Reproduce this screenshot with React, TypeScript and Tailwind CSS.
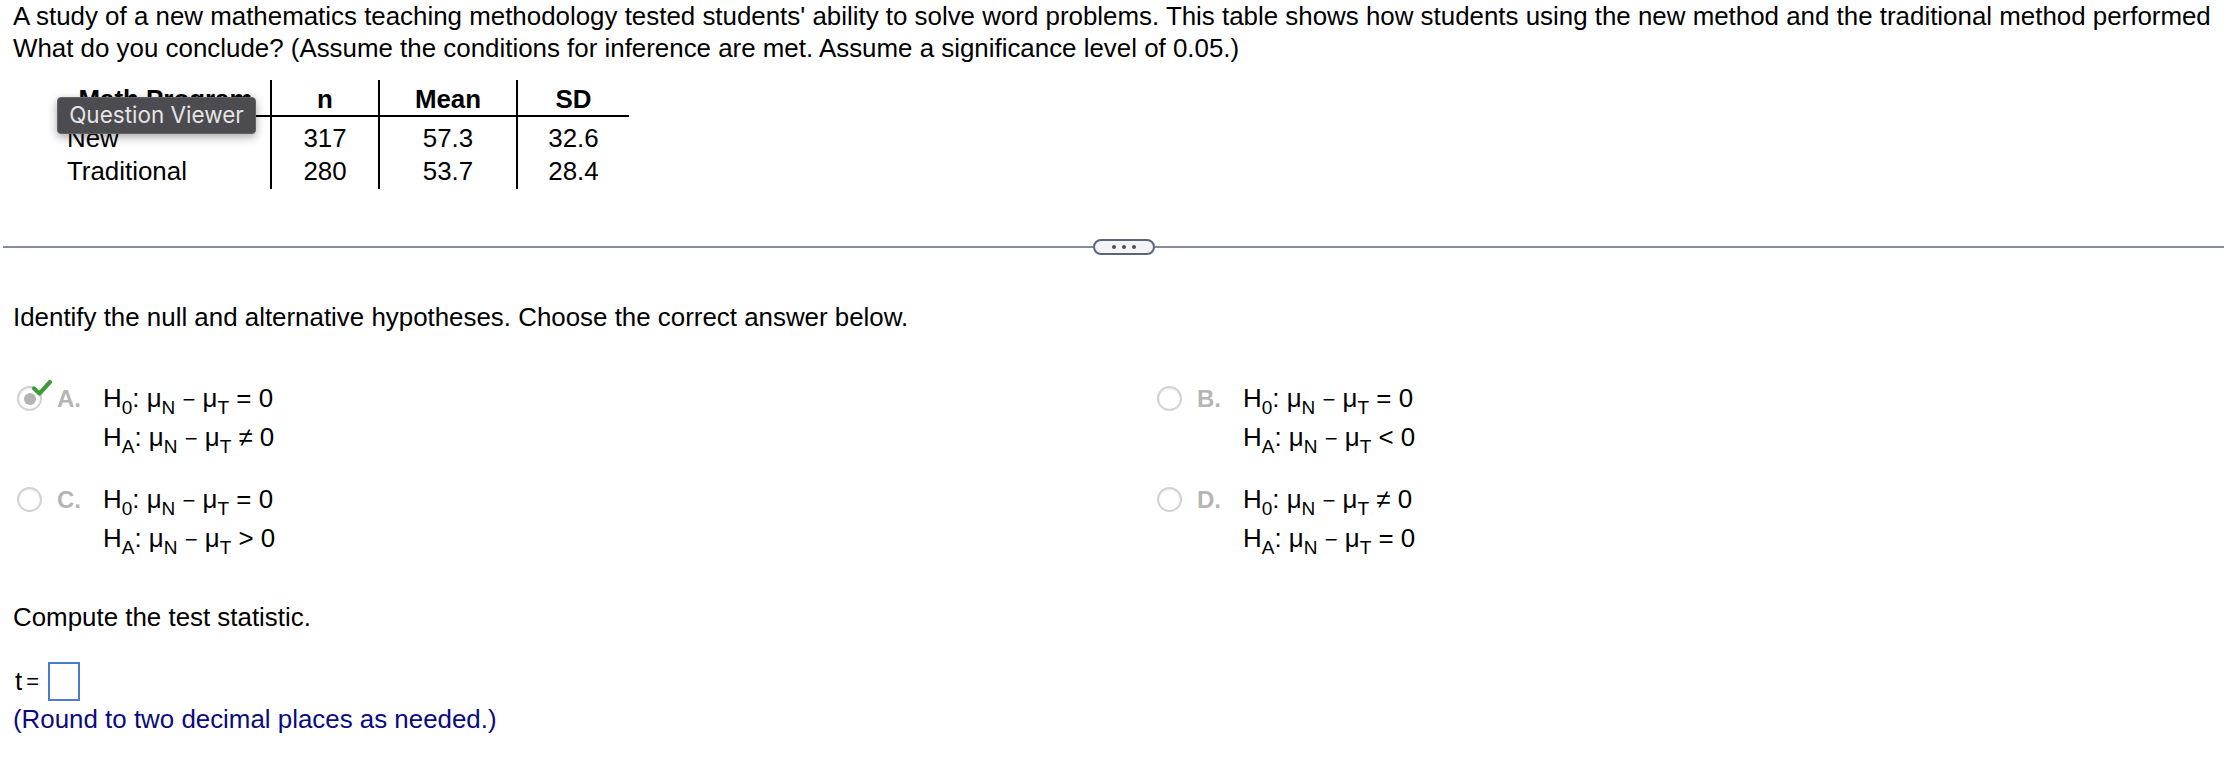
import React from 'react';

type Opt = {
    letter: string;
    h0: string;
    ha: string;
    checked?: boolean;
};

const options: Opt[] = [
    { letter: 'A.', h0: '=', ha: '≠', checked: true },
    { letter: 'B.', h0: '=', ha: '<' },
    { letter: 'C.', h0: '=', ha: '>' },
    { letter: 'D.', h0: '≠', ha: '=' },
];

function Sub({ children }: { children: React.ReactNode }) {
    return <span className="relative top-[7px] text-[19px] leading-none">{children}</span>;
}

function Minus() {
    return <span className="text-[22px] leading-none">−</span>;
}

function Radio({ checked }: { checked?: boolean }) {
    return (
        <div className="relative w-[25px] h-[25px]">
            <div className="w-[25px] h-[25px] rounded-full border-[2.5px] border-[#d2d2d2] bg-white flex items-center justify-center shadow-[inset_0_1px_2px_rgba(0,0,0,0.08)]">
                {checked && <div className="w-[12px] h-[12px] rounded-full bg-[#b3b3b3]" />}
            </div>
            {checked && (
                <svg className="absolute left-[14px] top-[-7px]" width="22" height="18" viewBox="0 0 22 18">
                    <path
                        d="M3 9.5 L8.5 14.5 L19 3"
                        fill="none"
                        stroke="#3f9b3a"
                        strokeWidth="4.2"
                        strokeLinecap="round"
                        strokeLinejoin="round"
                    />
                </svg>
            )}
        </div>
    );
}

function Option({ opt }: { opt: Opt }) {
    return (
        <div className="flex items-start">
            <div className="w-[40px] h-[39px] flex items-center">
                <Radio checked={opt.checked} />
            </div>
            <div className="w-[46px] h-[39px] leading-[39px] font-bold text-[24px] text-[#b5b5b5]">{opt.letter}</div>
            <div className="leading-[39px] whitespace-nowrap">
                <div className="h-[39px]">
                    H<Sub>0</Sub>: μ<Sub>N</Sub> <Minus /> μ<Sub>T</Sub> {opt.h0} 0
                </div>
                <div className="h-[39px]">
                    H<Sub>A</Sub>: μ<Sub>N</Sub> <Minus /> μ<Sub>T</Sub> {opt.ha} 0
                </div>
            </div>
        </div>
    );
}

export default function App() {
    return (
        <div className="w-[2224px] h-[772px] overflow-hidden bg-white text-black font-['Liberation_Sans',Arial,sans-serif] text-[25.9px]">
            {/* question text */}
            <div className="pl-[13px] leading-[32px] whitespace-nowrap">
                <p>
                    A study of a new mathematics teaching methodology tested students' ability to solve word problems. This table shows how students using the new method and the traditional method performed
                </p>
                <p>What do you conclude? (Assume the conditions for inference are met. Assume a significance level of 0.05.)</p>
            </div>

            {/* data table */}
            <div className="relative ml-[61px] mt-[16px] w-fit leading-none">
                <div className="flex h-[37px] border-b-2 border-black font-bold">
                    <div className="w-[209px] pt-[7px] text-center">Math Program</div>
                    <div className="w-[108px] pt-[7px] text-center border-l-2 border-black">n</div>
                    <div className="w-[138px] pt-[7px] text-center border-l-2 border-black">Mean</div>
                    <div className="w-[113px] pt-[7px] text-center border-l-2 border-black">SD</div>
                </div>
                <div className="flex h-[39px]">
                    <div className="w-[209px] pt-[9px] pl-[6px]">New</div>
                    <div className="w-[108px] pt-[9px] text-center border-l-2 border-black">317</div>
                    <div className="w-[138px] pt-[9px] text-center border-l-2 border-black">57.3</div>
                    <div className="w-[113px] pt-[9px] text-center border-l-2 border-black">32.6</div>
                </div>
                <div className="flex h-[33px]">
                    <div className="w-[209px] pt-[3px] pl-[6px]">Traditional</div>
                    <div className="w-[108px] pt-[3px] text-center border-l-2 border-black">280</div>
                    <div className="w-[138px] pt-[3px] text-center border-l-2 border-black">53.7</div>
                    <div className="w-[113px] pt-[3px] text-center border-l-2 border-black">28.4</div>
                </div>

                <div className="absolute left-[-4px] top-[17px] w-[199px] h-[37px] rounded-[4px] bg-[#4c4b50] border border-[#646368] shadow-[0_3px_10px_rgba(0,0,0,0.35)] flex items-center justify-center font-['Inter',sans-serif] text-[22.5px] text-[#e4e4e4]">
                    Question Viewer
                </div>
            </div>

            {/* divider */}
            <div className="mt-[50px] pl-[3px] flex items-center h-[16px]">
                <div className="w-[1090px] h-[2px] bg-[#858b98]" />
                <div className="w-[62px] h-[16px] rounded-full border-2 border-[#5b6578] bg-[#f3f4f6] flex items-center justify-center gap-[6px]">
                    <span className="w-[4px] h-[4px] rounded-full bg-[#4b4f58]" />
                    <span className="w-[4px] h-[4px] rounded-full bg-[#4b4f58]" />
                    <span className="w-[4px] h-[4px] rounded-full bg-[#4b4f58]" />
                </div>
                <div className="flex-1 h-[2px] bg-[#858b98]" />
            </div>

            <p className="mt-[46px] pl-[13px] leading-[32px]">Identify the null and alternative hypotheses. Choose the correct answer below.</p>

            {/* answer choices */}
            <div className="mt-[46px] pl-[17px] grid grid-cols-[1140px_1fr] gap-y-[23px]">
                {options.map((o) => (
                    <Option key={o.letter} opt={o} />
                ))}
            </div>

            <p className="mt-[43px] pl-[13px] leading-[32px]">Compute the test statistic.</p>

            <div className="mt-[29px] pl-[15px] flex items-center h-[39px] leading-none">
                <span>t</span>
                <span className="ml-[4px] text-[22px]">=</span>
                <span className="ml-[9px] w-[32px] h-[39px] border-2 border-[#4a7bd0] bg-white" />
            </div>
            <p className="mt-[2px] pl-[13px] leading-[32px] text-[#0a0a82]">(Round to two decimal places as needed.)</p>
        </div>
    );
}
